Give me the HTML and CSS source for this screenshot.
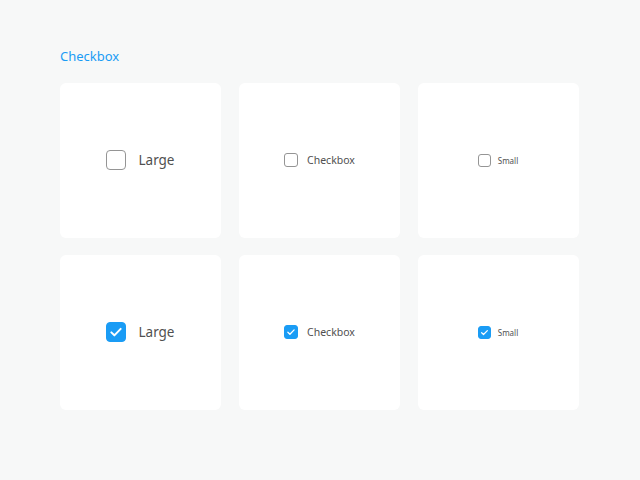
FILE: index.html
```html
<!DOCTYPE html>
<html>
<head>
<meta charset="utf-8">
<link rel="stylesheet" href="styles.css">
</head>
<body>
<main class="page">
  <h1 class="title">Checkbox</h1>
  <div class="grid">
    <div class="card"><label class="cb cb-lg"><span class="box"></span><span class="text">Large</span></label></div>
    <div class="card"><label class="cb cb-md"><span class="box"></span><span class="text">Checkbox</span></label></div>
    <div class="card"><label class="cb cb-sm"><span class="box"></span><span class="text">Small</span></label></div>
    <div class="card"><label class="cb cb-lg checked"><span class="box"><svg viewBox="0 0 20 20"><path d="M4.8 10.4l3.4 3.3 7-7.2"/></svg></span><span class="text">Large</span></label></div>
    <div class="card"><label class="cb cb-md checked"><span class="box"><svg viewBox="0 0 20 20"><path d="M4.8 10.4l3.4 3.3 7-7.2"/></svg></span><span class="text">Checkbox</span></label></div>
    <div class="card"><label class="cb cb-sm checked"><span class="box"><svg viewBox="0 0 20 20"><path d="M4.8 10.4l3.4 3.3 7-7.2"/></svg></span><span class="text">Small</span></label></div>
  </div>
</main>
</body>
</html>
```
FILE: styles.css
```css
html, body {
  margin: 0;
  height: 100%;
  background: #f7f8f8;
  font-family: "Noto Sans", "Open Sans", sans-serif;
}

.page {
  padding: 47px 61px 0 60px;
}

.title {
  margin: 0 0 17px;
  font-size: 13px;
  font-weight: 400;
  line-height: 19px;
  color: #1a9cf5;
}

.grid {
  display: grid;
  grid-template-columns: repeat(3, 161px);
  grid-auto-rows: 155px;
  column-gap: 18px;
  row-gap: 17px;
}

.card {
  background: #ffffff;
  border-radius: 6px;
  display: flex;
  align-items: center;
  justify-content: center;
}

.cb {
  display: flex;
  align-items: center;
  margin-top: -1px;
  color: #505050;
}

.box {
  box-sizing: border-box;
  border: 1px solid #959595;
  background: #fff;
  display: flex;
  align-items: center;
  justify-content: center;
}

.box svg {
  width: 100%;
  height: 100%;
  fill: none;
  stroke: #fff;
  stroke-width: 2.2;
  stroke-linecap: round;
  stroke-linejoin: round;
}

.checked .box {
  background: #1a9cf5;
  border-color: #1a9cf5;
}

.cb-lg { margin-left: 0; }
.cb-lg .box { width: 20px; height: 20px; border-radius: 4px; }
.cb-lg .text { margin-left: 12px; font-size: 13.5px; }

.cb-md { margin-left: 0; }
.cb-md .box { width: 14px; height: 14px; border-radius: 3px; }
.cb-md .text { margin-left: 9px; font-size: 10.5px; }

.cb-sm { margin-left: -1px; }
.cb-sm .box { width: 13px; height: 13px; border-radius: 3px; }
.cb-sm .text { margin-left: 7px; font-size: 8px; }
```
